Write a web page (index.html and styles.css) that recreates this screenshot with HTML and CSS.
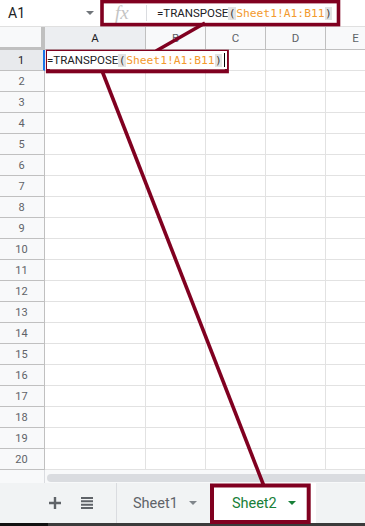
FILE: index.html
```html
<!DOCTYPE html>
<html>
<head>
<meta charset="utf-8">
<link rel="stylesheet" href="styles.css">
</head>
<body>
<div class="app">
  <div class="topbar">
    <div class="namebox"><span class="nb-text">A1</span><span class="caret"></span></div>
    <div class="fx">fx</div>
    <div class="sep"></div>
    <div class="formula"><span class="fn">=TRANSPOSE</span><span class="paren">(</span><span class="rng">Sheet1!A1:B11</span><span class="paren">)</span></div>
  </div>
  <div class="grid">
    <div class="row head">
      <div class="rh corner"></div>
      <div class="c ca hsel">A</div>
      <div class="c">B</div>
      <div class="c">C</div>
      <div class="c">D</div>
      <div class="c">E</div>
    </div>
    <div class="row">
      <div class="rh rsel">1</div>
      <div class="c ca"><span class="editor"><span class="fn">=TRANSPOSE</span><span class="paren">(</span><span class="rng">Sheet1!A1:B11</span><span class="paren">)</span><span class="cursor"></span></span></div>
      <div class="c"></div><div class="c"></div><div class="c"></div><div class="c"></div>
    </div>
    <div class="row"><div class="rh">2</div><div class="c ca"></div><div class="c"></div><div class="c"></div><div class="c"></div><div class="c"></div></div>
    <div class="row"><div class="rh">3</div><div class="c ca"></div><div class="c"></div><div class="c"></div><div class="c"></div><div class="c"></div></div>
    <div class="row"><div class="rh">4</div><div class="c ca"></div><div class="c"></div><div class="c"></div><div class="c"></div><div class="c"></div></div>
    <div class="row"><div class="rh">5</div><div class="c ca"></div><div class="c"></div><div class="c"></div><div class="c"></div><div class="c"></div></div>
    <div class="row"><div class="rh">6</div><div class="c ca"></div><div class="c"></div><div class="c"></div><div class="c"></div><div class="c"></div></div>
    <div class="row"><div class="rh">7</div><div class="c ca"></div><div class="c"></div><div class="c"></div><div class="c"></div><div class="c"></div></div>
    <div class="row"><div class="rh">8</div><div class="c ca"></div><div class="c"></div><div class="c"></div><div class="c"></div><div class="c"></div></div>
    <div class="row"><div class="rh">9</div><div class="c ca"></div><div class="c"></div><div class="c"></div><div class="c"></div><div class="c"></div></div>
    <div class="row"><div class="rh">10</div><div class="c ca"></div><div class="c"></div><div class="c"></div><div class="c"></div><div class="c"></div></div>
    <div class="row"><div class="rh">11</div><div class="c ca"></div><div class="c"></div><div class="c"></div><div class="c"></div><div class="c"></div></div>
    <div class="row"><div class="rh">12</div><div class="c ca"></div><div class="c"></div><div class="c"></div><div class="c"></div><div class="c"></div></div>
    <div class="row"><div class="rh">13</div><div class="c ca"></div><div class="c"></div><div class="c"></div><div class="c"></div><div class="c"></div></div>
    <div class="row"><div class="rh">14</div><div class="c ca"></div><div class="c"></div><div class="c"></div><div class="c"></div><div class="c"></div></div>
    <div class="row"><div class="rh">15</div><div class="c ca"></div><div class="c"></div><div class="c"></div><div class="c"></div><div class="c"></div></div>
    <div class="row"><div class="rh">16</div><div class="c ca"></div><div class="c"></div><div class="c"></div><div class="c"></div><div class="c"></div></div>
    <div class="row"><div class="rh">17</div><div class="c ca"></div><div class="c"></div><div class="c"></div><div class="c"></div><div class="c"></div></div>
    <div class="row"><div class="rh">18</div><div class="c ca"></div><div class="c"></div><div class="c"></div><div class="c"></div><div class="c"></div></div>
    <div class="row"><div class="rh">19</div><div class="c ca"></div><div class="c"></div><div class="c"></div><div class="c"></div><div class="c"></div></div>
    <div class="row"><div class="rh">20</div><div class="c ca"></div><div class="c"></div><div class="c"></div><div class="c"></div><div class="c"></div></div>
  </div>
  <div class="hscroll"><div class="hs-rh"></div><div class="hs-track"><div class="thumb"></div></div></div>
  <div class="tabs">
    <div class="tools">
      <svg class="icon" width="14" height="14" viewBox="0 0 14 14"><path d="M7 1v12M1 7h12" stroke="#5f6368" stroke-width="2.4" fill="none"/></svg>
      <svg class="icon" width="14" height="14" viewBox="0 0 14 14"><path d="M1 2h12M1 5.3h12M1 8.7h12M1 12h12" stroke="#5f6368" stroke-width="2" fill="none"/></svg>
    </div>
    <div class="tab"><span>Sheet1</span><span class="tcaret"></span></div>
    <div class="tab active"><span>Sheet2</span><span class="tcaret"></span></div>
  </div>
  <div class="edge"><div class="edge-l"></div></div>
  <svg class="annot" width="365" height="526" viewBox="0 0 365 526">
    <g stroke="#800020" fill="none">
      <rect x="102" y="1.6" width="236.5" height="23" stroke-width="3.6"/>
      <rect x="47.9" y="51.7" width="179" height="19.6" stroke-width="4"/>
      <rect x="212" y="485.5" width="96.7" height="36.5" stroke-width="4"/>
      <line x1="205" y1="23" x2="156" y2="51" stroke-width="3.6"/>
      <line x1="102.5" y1="72" x2="263.5" y2="485" stroke-width="3.6"/>
    </g>
  </svg>
</div>
</body>
</html>
```

FILE: styles.css
```css
* { box-sizing: border-box; }
html, body { margin: 0; padding: 0; background: #fff; }
body { font-family: Roboto, "Liberation Sans", Arial, sans-serif; }
.app { position: relative; width: 365px; height: 526px; overflow: hidden; }

.topbar {
  height: 27px;
  display: flex;
  align-items: center;
  border-bottom: 1px solid #e0e0e0;
}
.namebox {
  width: 101px;
  display: flex;
  align-items: center;
  padding-left: 8px;
  padding-right: 7px;
  justify-content: space-between;
}
.nb-text { font-size: 14px; color: #202124; }
.caret {
  width: 0; height: 0;
  border-left: 4px solid transparent;
  border-right: 4px solid transparent;
  border-top: 4px solid #70757a;
}
.fx {
  width: 45px;
  padding-left: 14px;
  font-family: "Liberation Serif", "DejaVu Serif", serif;
  font-style: italic;
  font-size: 19px;
  color: #c4c4c4;
  line-height: 20px;
}
.sep { width: 1px; height: 16px; background: #dadce0; margin-right: 10px; }
.formula { display: flex; align-items: center; white-space: nowrap; }
.fn { font-family: Roboto, sans-serif; font-size: 11.5px; color: #202124; }
.paren {
  font-family: "DejaVu Sans Mono", monospace;
  font-size: 11.3px;
  color: #444;
  background: #e3e3e3;
  padding: 0 0.5px;
}
.rng { font-family: "DejaVu Sans Mono", monospace; font-size: 11.3px; color: #f39a2e; }

.grid { display: flex; flex-direction: column; }
.row { display: flex; height: 21px; }
.row.head { height: 23px; }
.rh {
  flex: 0 0 45px;
  background: #f8f9fa;
  border-right: 1px solid #c0c0c0;
  border-bottom: 1px solid #c0c0c0;
  color: #5f6368;
  font-size: 11px;
  display: flex;
  align-items: center;
  justify-content: center;
  padding-right: 1px;
}
.rh.corner {
  background: #f8f9fa;
  border-right: 4px solid #c0c0c0;
  border-bottom: 3px solid #c0c0c0;
}
.rh.rsel { background: #e8eaed; color: #202124; border-right: 2px solid #1a73e8; }
.c {
  flex: 0 0 60px;
  border-right: 1px solid #e2e2e2;
  border-bottom: 1px solid #e2e2e2;
  position: relative;
}
.c.ca { flex-basis: 101px; }
.head .c {
  background: #f8f9fa;
  border-right: 1px solid #c0c0c0;
  border-bottom: 1px solid #c0c0c0;
  color: #5f6368;
  font-size: 11.5px;
  display: flex;
  align-items: center;
  justify-content: center;
}
.head .c.hsel { background: #eceef1; color: #202124; }
.editor {
  position: absolute;
  left: 2px;
  top: 1px;
  height: 18px;
  z-index: 2;
  background: #fff;
  display: flex;
  align-items: center;
  white-space: nowrap;
  padding-right: 2px;
}
.cursor { display: inline-block; width: 1px; height: 14px; background: #000; margin-left: 2px; }

.hscroll { display: flex; height: 13px; background: #f8f9fa; }
.hs-rh { flex: 0 0 45px; border-right: 1px solid #dadce0; }
.hs-track { flex: 1; padding: 4px 0 1px 2px; }
.thumb { height: 8px; background: #dadce0; border-radius: 4px 0 0 4px; }

.tabs {
  height: 40px;
  background: #f1f3f4;
  display: flex;
  align-items: stretch;
}
.tools {
  width: 117px;
  display: flex;
  align-items: center;
  gap: 18px;
  padding-left: 48px;
  border-right: 1px solid #dadce0;
}
.icon { display: block; }
.tab {
  display: flex;
  align-items: center;
  padding: 0 16px 0 16px;
  gap: 11px;
  font-size: 14.5px;
  color: #5f6368;
}
.tab .tcaret {
  width: 0; height: 0;
  border-left: 4.5px solid transparent;
  border-right: 4.5px solid transparent;
  border-top: 4.5px solid #80868b;
}
.tab.active {
  margin-left: 0;
  width: 103px;
  background: #fff;
  color: #188038;
  padding-left: 19px;
}
.tab.active .tcaret { border-top-color: #188038; }

.edge { height: 3px; background: #3b3b3b; display: flex; }
.edge-l { width: 48px; background: #111; }

.annot { position: absolute; left: 0; top: 0; pointer-events: none; }
```
